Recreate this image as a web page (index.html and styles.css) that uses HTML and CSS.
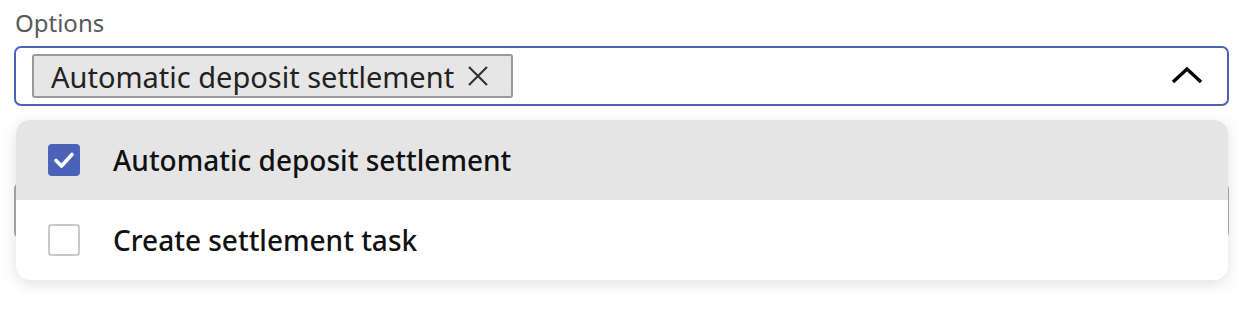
FILE: index.html
```html
<!DOCTYPE html>
<html>
<head>
<meta charset="utf-8">
<link rel="stylesheet" href="styles.css">
</head>
<body>
<div class="page">
  <div class="field">
    <label class="label">Options</label>
    <div class="control focused">
      <span class="chip">Automatic deposit settlement
        <svg class="chip-x" width="22" height="22" viewBox="0 0 22 22"><path d="M2 2 L20 20 M20 2 L2 20" stroke="#333" stroke-width="2.2" fill="none"/></svg>
      </span>
      <svg class="chevron" width="32" height="20" viewBox="0 0 32 20"><path d="M2 16 L16 3 L30 16" stroke="#000" stroke-width="3.4" fill="none" stroke-linecap="butt" stroke-linejoin="miter"/></svg>
    </div>
    <div class="menu">
      <div class="option active">
        <span class="box checked"><svg width="22" height="18" viewBox="0 0 22 18"><path d="M3 9.5 L8.5 15 L19 3.5" stroke="#fff" stroke-width="3.6" fill="none" stroke-linecap="round" stroke-linejoin="round"/></svg></span>
        <span class="option-text">Automatic deposit settlement</span>
      </div>
      <div class="option">
        <span class="box"></span>
        <span class="option-text">Create settlement task</span>
      </div>
    </div>
  </div>
  <div class="field second">
    <label class="label">Other</label>
    <div class="control plain"></div>
  </div>
</div>
</body>
</html>
```
FILE: styles.css
```css
* { box-sizing: border-box; }
html, body { margin: 0; padding: 0; background: #fff; }
body { font-family: "Noto Sans", "Open Sans", sans-serif; width: 1246px; height: 318px; overflow: hidden; }
.page { padding: 8px 17px 0 14px; }
.field { position: relative; }
.label { display: block; font-size: 24px; line-height: 30px; color: #595959; height: 30px; margin-bottom: 8px; padding-left: 1px; }
.control { height: 60px; border-radius: 7px; display: flex; align-items: center; padding: 0 24px 0 16px; }
.control.focused { border: 2px solid #4a63b9; }
.control.plain { border: 2px solid #aaa; height: 57px; }
.chip { display: inline-flex; align-items: center; height: 44px; padding: 0 22px 0 17px; background: #e6e6e6; border: 2px solid #999; border-radius: 3px; font-size: 29px; color: #222; gap: 13px; }
.chip-x { display: block; }
.chevron { margin-left: auto; display: block; }
.menu { position: absolute; top: 112px; left: 2px; right: 1px; background: #fff; border-radius: 14px; box-shadow: 0 4px 16px rgba(0,0,0,0.12); overflow: hidden; z-index: 2; }
.option { height: 80px; display: flex; align-items: center; padding-left: 32px; }
.option.active { background: #e5e5e5; }
.box { width: 32px; height: 32px; border-radius: 4px; border: 2px solid #c8c8c8; background: #fff; display: flex; align-items: center; justify-content: center; flex-shrink: 0; }
.box.checked { background: #4a63b9; border-color: #4a63b9; }
.option-text { margin-left: 33px; font-size: 28px; font-weight: 500; color: #111; }
.second { margin-top: 38px; }
```
